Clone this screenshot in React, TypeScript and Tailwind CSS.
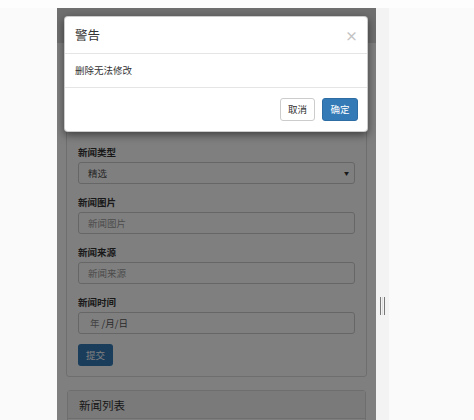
import React from "react";

const font = { fontFamily: '"Noto Sans CJK SC", "Noto Sans", sans-serif' };

function Group({ label, children }: { label: string; children: React.ReactNode }) {
  return (
    <div className="mb-[11px] flex flex-col">
      <div className="mb-[3px] h-[14px] text-[9.5px] font-bold leading-[14px] text-[#333]">{label}</div>
      {children}
    </div>
  );
}

function Input({ text, placeholder }: { text?: string; placeholder?: boolean }) {
  return (
    <div
      className={`flex h-[22px] items-center rounded-[3px] border border-[#ccc] bg-white px-[9px] text-[9.5px] ${
        placeholder ? "text-[#999]" : "text-[#555]"
      }`}
    >
      {text}
    </div>
  );
}

export default function App() {
  return (
    <div className="flex h-[420px] w-[474px] flex-col overflow-hidden bg-[#fafafa]" style={font}>
      <div className="h-[8px] shrink-0 bg-[#fdfdfd]" />
      <div className="flex flex-1">
        <div className="w-[57px] shrink-0 bg-[#fafafa]" />
        <div className="relative h-[412px] w-[319px] shrink-0 overflow-hidden bg-white">
          {/* underlying page */}
          <div className="h-[35px] bg-[#dedede]" />
          <div className="mx-[9px] mt-[7px] rounded-[3px] border border-[#ddd]">
            <div className="h-[26px] border-b border-[#ddd] bg-[#f5f5f5]" />
            <div className="px-[11px] pb-[10px] pt-[18px]">
              <div className="mb-[11px] h-[39px]" />
              <Group label="新闻类型">
                <div className="flex h-[22px] items-center justify-between rounded-[3px] border border-[#ccc] bg-white pl-[9px] pr-[5px] text-[9.5px] text-[#555]">
                  <span>精选</span>
                  <span className="text-[5px] text-[#333]">▼</span>
                </div>
              </Group>
              <Group label="新闻图片">
                <Input text="新闻图片" placeholder />
              </Group>
              <Group label="新闻来源">
                <Input text="新闻来源" placeholder />
              </Group>
              <Group label="新闻时间">
                <div className="flex h-[22px] items-center rounded-[3px] border border-[#ccc] bg-white pl-[11px] text-[9.5px] text-[#555]">
                  <span className="text-[#888]">年</span>
                  <span className="ml-[2px]">/月/日</span>
                </div>
              </Group>
              <div className="-mt-[1px] flex h-[22px] w-[35px] items-center justify-center rounded-[3px] bg-[#337ab7] text-[9.5px] text-white">
                提交
              </div>
            </div>
          </div>
          <div className="mx-[10px] mt-[13px] rounded-[3px] border border-[#ddd]">
            <div className="h-[28px] border-b border-[#ddd] bg-[#f5f5f5] px-[11px] text-[11.5px] leading-[28px] text-[#333]">
              新闻列表
            </div>
            <div className="h-[40px]" />
          </div>

          {/* backdrop */}
          <div className="absolute inset-0 bg-black/50" />

          {/* modal */}
          <div className="absolute left-[7px] top-[8px] flex w-[304px] flex-col rounded-[4px] border border-black/20 bg-white shadow-[0_3px_9px_rgba(0,0,0,0.5)]">
            <div className="flex h-[37px] items-center justify-between border-b border-[#e5e5e5] pl-[10px] pr-[9px]">
              <span className="text-[12.5px] text-[#333]">警告</span>
              <span className="text-[13px] font-bold leading-none text-[#c4c4c4]">×</span>
            </div>
            <div className="flex h-[34px] items-center border-b border-[#e5e5e5] px-[10px] text-[9.5px] text-[#333]">
              删除无法修改
            </div>
            <div className="flex h-[43px] items-start justify-end gap-[7px] pr-[9px] pt-[10px]">
              <div className="flex h-[23px] w-[35px] items-center justify-center rounded-[3px] border border-[#ccc] bg-white text-[9.5px] text-[#333]">
                取消
              </div>
              <div className="flex h-[23px] w-[36px] items-center justify-center rounded-[3px] border border-[#2e6da4] bg-[#337ab7] text-[9.5px] text-white">
                确定
              </div>
            </div>
          </div>
        </div>
        <div className="flex w-[13px] shrink-0 justify-center bg-[#f3f3f3] pt-[289px]">
          <div className="flex h-[18px] gap-[1px]">
            <div className="w-[1px] bg-[#777]" />
            <div className="w-[1px] bg-[#ddd]" />
            <div className="w-[1px] bg-[#777]" />
          </div>
        </div>
        <div className="flex-1 bg-[#fafafa]" />
      </div>
    </div>
  );
}
